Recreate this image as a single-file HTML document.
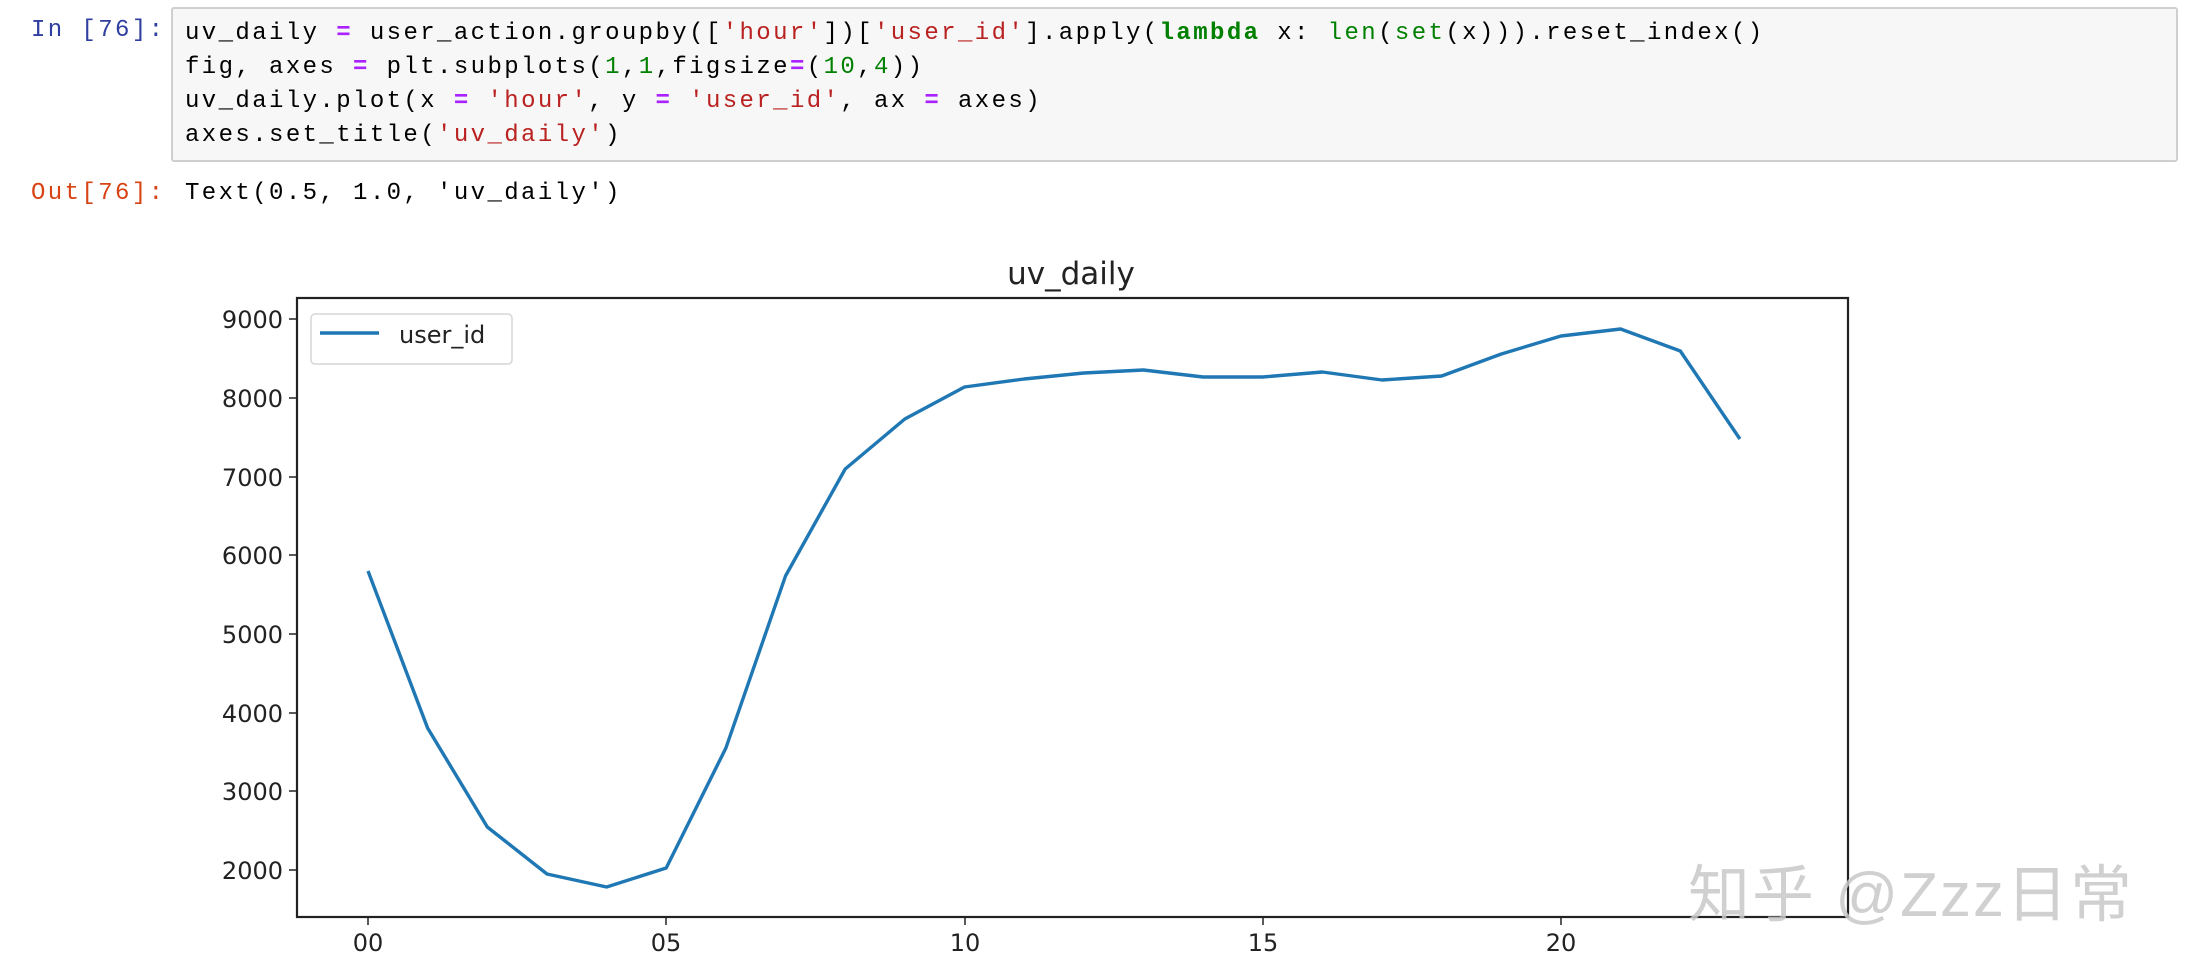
<!DOCTYPE html>
<html><head><meta charset="utf-8"><style>
html,body{margin:0;padding:0;background:#fff;width:2186px;height:978px;overflow:hidden;position:relative}
.mono{font-family:"Liberation Mono","DejaVu Sans Mono",monospace;font-size:24px;letter-spacing:2.4px;white-space:pre;position:absolute}
.cell{position:absolute;left:171px;top:7px;width:2007px;height:155px;background:#f7f7f7;border:2px solid #cfcfcf;border-radius:3px;box-sizing:border-box}
.k{color:#008000;font-weight:bold}.s{color:#BA2121}.o{color:#AA22FF;font-weight:bold}.n{color:#008000}.b{color:#008000}
</style></head><body>
<div class="mono" style="left:31px;top:17px;color:#303F9F">In [76]:</div>
<div class="cell"></div>
<div class="mono" style="left:185px;top:17px;line-height:34px;color:#000">uv_daily <span class="o">=</span> user_action.groupby([<span class="s">'hour'</span>])[<span class="s">'user_id'</span>].apply(<span class="k">lambda</span> x: <span class="b">len</span>(<span class="b">set</span>(x))).reset_index()
fig, axes <span class="o">=</span> plt.subplots(<span class="n">1</span>,<span class="n">1</span>,figsize<span class="o">=</span>(<span class="n">10</span>,<span class="n">4</span>))
uv_daily.plot(x <span class="o">=</span> <span class="s">'hour'</span>, y <span class="o">=</span> <span class="s">'user_id'</span>, ax <span class="o">=</span> axes)
axes.set_title(<span class="s">'uv_daily'</span>)</div>
<div class="mono" style="left:31px;top:180px;color:#D84315">Out[76]:</div>
<div class="mono" style="left:185px;top:180px;color:#000">Text(0.5, 1.0, 'uv_daily')</div>
<svg width="2186" height="978" style="position:absolute;left:0;top:0" font-family="DejaVu Sans, sans-serif">
<text x="1071" y="284" font-size="31" text-anchor="middle" fill="#222">uv_daily</text>
<rect x="297" y="298" width="1551" height="619" fill="none" stroke="#222" stroke-width="2.2"/>
<g fill="#222" font-size="24" text-anchor="end">
<text x="283" y="328">9000</text><text x="283" y="407">8000</text><text x="283" y="486">7000</text><text x="283" y="564">6000</text><text x="283" y="643">5000</text><text x="283" y="722">4000</text><text x="283" y="800">3000</text><text x="283" y="879">2000</text>
</g>
<g stroke="#222" stroke-width="1.5">
<line x1="289" x2="297" y1="319" y2="319"/><line x1="289" x2="297" y1="398" y2="398"/><line x1="289" x2="297" y1="477" y2="477"/><line x1="289" x2="297" y1="555" y2="555"/><line x1="289" x2="297" y1="634" y2="634"/><line x1="289" x2="297" y1="713" y2="713"/><line x1="289" x2="297" y1="791" y2="791"/><line x1="289" x2="297" y1="870" y2="870"/>
<line x1="368" x2="368" y1="917" y2="925"/><line x1="666" x2="666" y1="917" y2="925"/><line x1="965" x2="965" y1="917" y2="925"/><line x1="1263" x2="1263" y1="917" y2="925"/><line x1="1561" x2="1561" y1="917" y2="925"/>
</g>
<g fill="#222" font-size="24" text-anchor="middle">
<text x="368" y="951">00</text><text x="666" y="951">05</text><text x="965" y="951">10</text><text x="1263" y="951">15</text><text x="1561" y="951">20</text>
</g>
<polyline fill="none" stroke="#1f77b4" stroke-width="3.4" stroke-linejoin="round" points="368,571 427.6,728 487.3,827 547,874 606.6,887 666.2,868 725.9,748 785.5,576 845.2,469 904.8,419 964.5,387 1024.1,379 1083.8,373 1143.4,370 1203.1,377 1262.7,377 1322.4,372 1382,380 1441.7,376 1501.3,354 1561,336 1620.6,329 1680.3,351 1739.9,439"/>
<rect x="311" y="314" width="201" height="50" rx="4" fill="#fff" stroke="#d6d6d6" stroke-width="1.5"/>
<line x1="320" x2="379" y1="333" y2="333" stroke="#1f77b4" stroke-width="3.4"/>
<text x="399" y="343" font-size="24" fill="#222">user_id</text>
<text x="1688" y="916" font-size="62" letter-spacing="2" fill="#c8c8c8" font-family="Liberation Sans, Noto Sans CJK SC, sans-serif" opacity="0.85">知乎 @Zzz日常</text>
</svg>
</body></html>
